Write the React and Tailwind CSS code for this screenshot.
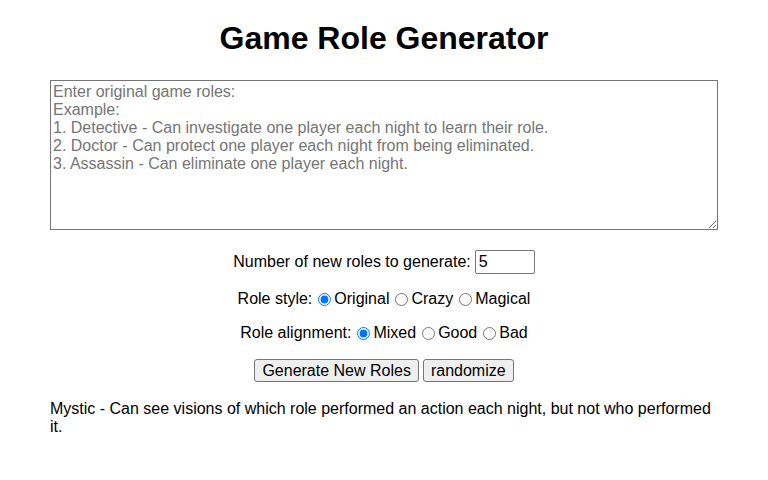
import React, { useState } from 'react';

const placeholder = `Enter original game roles:
Example:
1. Detective - Can investigate one player each night to learn their role.
2. Doctor - Can protect one player each night from being eliminated.
3. Assassin - Can eliminate one player each night.`;

export default function App() {
    const [count, setCount] = useState('5');
    const [style, setStyle] = useState('original');
    const [alignment, setAlignment] = useState('mixed');

    return (
        <div className="min-h-screen bg-white px-[50px] text-[16px] leading-[18px] text-black font-['Liberation_Sans',Arial,sans-serif]">
            <h1 className="pt-[20px] pb-[23px] text-center text-[32px] leading-[37px] font-bold">
                Game Role Generator
            </h1>

            <textarea
                className="block h-[150px] w-full resize-y border border-[#767676] px-[2px] py-[2px] text-[16px] leading-[18px] placeholder:text-[#757575] font-['Liberation_Sans',Arial,sans-serif]"
                placeholder={placeholder}
            />

            <div className="mt-[20px] flex items-center justify-center gap-[4px]">
                <label>Number of new roles to generate:</label>
                <input
                    type="number"
                    value={count}
                    onChange={(e) => setCount(e.target.value)}
                    className="h-[24px] w-[60px] border border-[#767676] rounded-[2px] px-[3px] text-[16px] [appearance:textfield] [&::-webkit-inner-spin-button]:appearance-none"
                />
            </div>

            <div className="mt-[16px] flex items-center justify-center">
                <span>Role style:</span>
                {[
                    ['original', 'Original'],
                    ['crazy', 'Crazy'],
                    ['magical', 'Magical'],
                ].map(([val, name]) => (
                    <label key={val} className="flex items-center">
                        <input
                            type="radio"
                            name="style"
                            checked={style === val}
                            onChange={() => setStyle(val)}
                            className="ml-[6px] mr-[3px] h-[13px] w-[13px]"
                        />
                        <span>{name}</span>
                    </label>
                ))}
            </div>

            <div className="mt-[16px] flex items-center justify-center">
                <span>Role alignment:</span>
                {[
                    ['mixed', 'Mixed'],
                    ['good', 'Good'],
                    ['bad', 'Bad'],
                ].map(([val, name]) => (
                    <label key={val} className="flex items-center">
                        <input
                            type="radio"
                            name="alignment"
                            checked={alignment === val}
                            onChange={() => setAlignment(val)}
                            className="ml-[6px] mr-[3px] h-[13px] w-[13px]"
                        />
                        <span>{name}</span>
                    </label>
                ))}
            </div>

            <div className="mt-[17px] flex justify-center gap-[4px]">
                <button className="h-[23px] rounded-[3px] border border-[#767676] bg-[#efefef] px-[7px] text-[16px]">
                    Generate New Roles
                </button>
                <button className="h-[23px] rounded-[3px] border border-[#767676] bg-[#efefef] px-[7px] text-[16px]">
                    randomize
                </button>
            </div>

            <div className="mt-[18px]">
                <p>Mystic - Can see visions of which role performed an action each night, but not who performed it.</p>
            </div>
        </div>
    );
}
